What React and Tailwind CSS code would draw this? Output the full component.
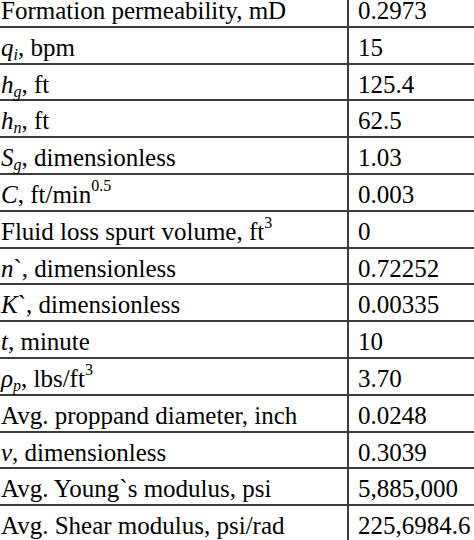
const I = ({ children }) => <i className="italic">{children}</i>;
const Sub = ({ children }) => <sub className="text-[16px] italic">{children}</sub>;
const Sup = ({ children }) => <sup className="text-[16px] align-[4px]">{children}</sup>;

const rows = [
  { label: <>Formation permeability, mD</>, value: "0.2973" },
  { label: <><I>q</I><Sub>i</Sub>, bpm</>, value: "15" },
  { label: <><I>h</I><Sub>g</Sub>, ft</>, value: "125.4" },
  { label: <><I>h</I><Sub>n</Sub>, ft</>, value: "62.5" },
  { label: <><I>S</I><Sub>g</Sub>, dimensionless</>, value: "1.03" },
  { label: <><I>C</I>, ft/min<Sup>0.5</Sup></>, value: "0.003" },
  { label: <>Fluid loss spurt volume, ft<Sup>3</Sup></>, value: "0" },
  { label: <><I>n</I>`, dimensionless</>, value: "0.72252" },
  { label: <><I>K</I>`, dimensionless</>, value: "0.00335" },
  { label: <><I>t</I>, minute</>, value: "10" },
  { label: <><I>ρ</I><Sub>p</Sub>, lbs/ft<Sup>3</Sup></>, value: "3.70" },
  { label: <>Avg. proppand diameter, inch</>, value: "0.0248" },
  { label: <><I>v</I>, dimensionless</>, value: "0.3039" },
  { label: <>Avg. Young`s modulus, psi</>, value: "5,885,000" },
  { label: <>Avg. Shear modulus, psi/rad</>, value: "225,6984.6" },
];

export default function App() {
  return (
    <div
      className="w-[474px] h-[540px] overflow-hidden bg-white text-black text-[25px] leading-none"
      style={{ fontFamily: '"Liberation Serif", "Times New Roman", serif' }}
    >
      <div className="-mt-[9px] flex flex-col">
        {rows.map((r, i) => (
          <div key={i} className="flex h-[36.8px] shrink-0 border-b-2 border-[#3c3c3c]">
            <div className="w-[349px] shrink-0 border-r-2 border-[#3c3c3c] pl-[1px] pt-[7px] whitespace-nowrap">
              {r.label}
            </div>
            <div className="pl-[9px] pt-[7px] whitespace-nowrap">{r.value}</div>
          </div>
        ))}
      </div>
    </div>
  );
}
